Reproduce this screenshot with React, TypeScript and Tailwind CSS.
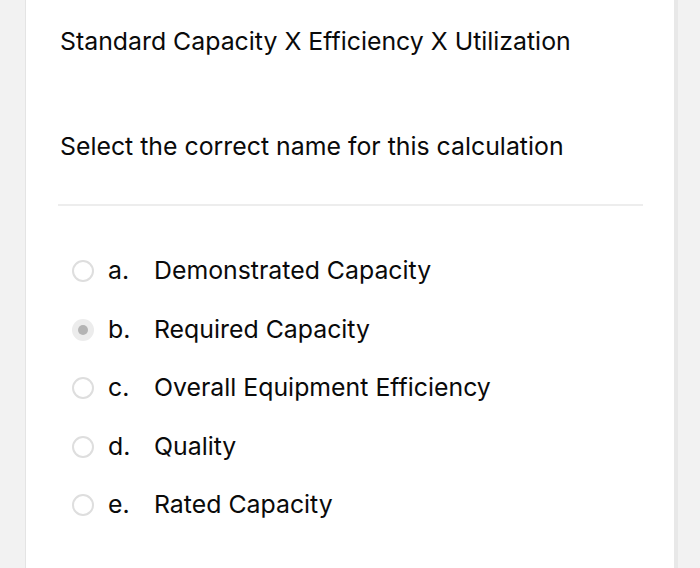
import React from "react";

const options = [
  { l: "a.", t: "Demonstrated Capacity", sel: false },
  { l: "b.", t: "Required Capacity", sel: true },
  { l: "c.", t: "Overall Equipment Efficiency", sel: false },
  { l: "d.", t: "Quality", sel: false },
  { l: "e.", t: "Rated Capacity", sel: false },
];

function Radio({ sel }: { sel: boolean }) {
  if (sel) {
    return (
      <div className="w-[22px] h-[22px] rounded-full bg-[#ececec] flex items-center justify-center">
        <div className="w-[10px] h-[10px] rounded-full bg-[#b4b4b4]" />
      </div>
    );
  }
  return <div className="w-[22px] h-[22px] rounded-full border-2 border-[#dedede] bg-white" />;
}

export default function App() {
  return (
    <div className="w-[700px] h-[568px] bg-[#f2f2f2] flex overflow-hidden font-['Inter',sans-serif] text-[#0a0a0a]">
      <div className="ml-[25px] w-[653px] h-full bg-white border-l border-r-[4px] border-l-[#e4e4e4] border-r-[#e8e8e8] pl-[34px] pr-[31px]">
        <div className="pt-[26px] text-[24.85px] leading-[30px]">
          Standard Capacity X Efficiency X Utilization
        </div>
        <div className="mt-[75px] text-[24.85px] leading-[30px]">
          Select the correct name for this calculation
        </div>
        <div className="mt-[43px] -ml-[2px] h-[2px] bg-[#ededed]" />
        <div className="mt-[50px] flex flex-col gap-[28.5px]">
          {options.map((o) => (
            <div key={o.l} className="flex items-center h-[30px]">
              <div className="ml-[12px] w-[22px] h-[22px] flex items-center justify-center">
                <Radio sel={o.sel} />
              </div>
              <span className="ml-[14px] w-[46px] text-[24.85px]">{o.l}</span>
              <span className="text-[24.85px]">{o.t}</span>
            </div>
          ))}
        </div>
      </div>
    </div>
  );
}
